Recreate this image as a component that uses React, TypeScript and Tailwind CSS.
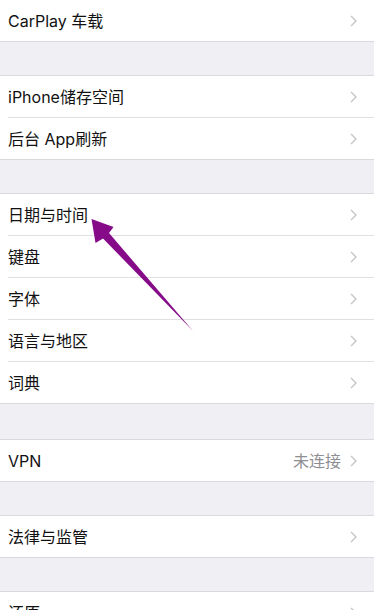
import type { ReactNode } from "react";

const FONT = '"Inter", "Noto Sans CJK SC", sans-serif';

function Chevron() {
  return (
    <svg width="7" height="12" viewBox="0 0 7 12" className="shrink-0">
      <polyline points="1,1 6,6 1,11" fill="none" stroke="#c5c5c9" strokeWidth="1.4" />
    </svg>
  );
}

function Row({ label, value }: { label: string; value?: string }) {
  return (
    <div className="flex h-[41px] items-center justify-between bg-white pl-2 pr-[17px]">
      <span className="text-[16px] text-[#111]">{label}</span>
      <div className="flex items-center gap-[9px]">
        {value && <span className="text-[16px] text-[#8e8e93]">{value}</span>}
        <Chevron />
      </div>
    </div>
  );
}

function Group({ children, top = true }: { children: ReactNode[]; top?: boolean }) {
  return (
    <div className={`border-b border-[#d9d9dd] bg-white ${top ? "border-t" : ""}`}>
      {children.map((c, i) => (
        <div key={i}>
          {i > 0 && <div className="ml-2 h-px bg-[#e0e0e3]" />}
          {c}
        </div>
      ))}
    </div>
  );
}

function Gap({ tall }: { tall?: boolean }) {
  return <div className={`${tall ? "h-[35px]" : "h-[33px]"} bg-[#efeff4]`} />;
}

export default function App() {
  return (
    <div className="relative h-[610px] w-[374px] overflow-hidden bg-[#efeff4]" style={{ fontFamily: FONT }}>
      <Group top={false}>{[<Row key="c" label="CarPlay 车载" />]}</Group>
      <Gap />
      <Group>{[<Row key="i" label="iPhone储存空间" />, <Row key="b" label="后台 App刷新" />]}</Group>
      <Gap />
      <Group>
        {[
          <Row key="d" label="日期与时间" />,
          <Row key="k" label="键盘" />,
          <Row key="z" label="字体" />,
          <Row key="y" label="语言与地区" />,
          <Row key="c2" label="词典" />,
        ]}
      </Group>
      <Gap tall />
      <Group>{[<Row key="v" label="VPN" value="未连接" />]}</Group>
      <Gap />
      <Group>{[<Row key="f" label="法律与监管" />]}</Group>
      <Gap />
      <Group>{[<Row key="h" label="还原" />]}</Group>

      <svg className="pointer-events-none absolute left-0 top-0" width="374" height="610">
        <polygon
          points="91.5,219 113.5,227 109,233 193,331 103,238.5 95.5,243"
          fill="#850b88"
        />
      </svg>
    </div>
  );
}
